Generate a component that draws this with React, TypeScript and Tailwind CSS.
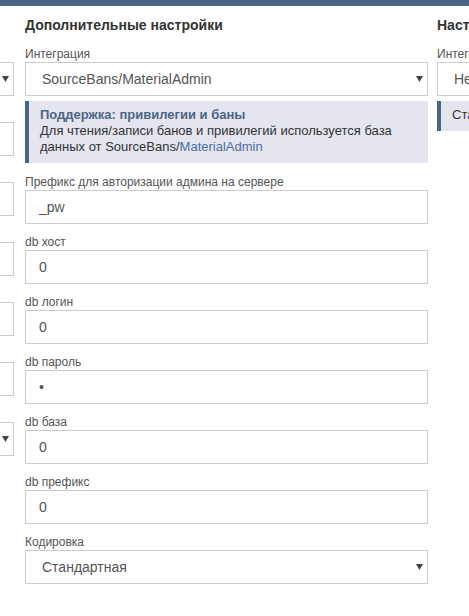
import React from "react";

const Arrow = () => (
  <svg width="7" height="6" viewBox="0 0 7 6" className="absolute right-[4px] top-1/2 -translate-y-1/2">
    <path d="M0 0 H7 L3.5 6 Z" fill="#444" />
  </svg>
);

const Label = ({ children }: { children?: React.ReactNode }) => (
  <div className="h-[16px] text-[12px] leading-[16px] text-[#555] whitespace-nowrap">{children}</div>
);

const Input = ({ value }: { value?: string }) => (
  <div className="h-[34px] border border-[#ccc] bg-white flex items-center pl-[13px] text-[14px] text-[#555] whitespace-nowrap overflow-hidden">
    {value}
  </div>
);

const Select = ({ value }: { value?: string }) => (
  <div className="relative h-[34px] border border-[#ccc] bg-white flex items-center pl-[16px] text-[14px] text-[#555] whitespace-nowrap overflow-hidden">
    {value}
    <Arrow />
  </div>
);

const Field = ({ label, value, select }: { label?: string; value?: string; select?: boolean }) => (
  <div className="mb-[10px]">
    <Label>{label}</Label>
    {select ? <Select value={value} /> : <Input value={value} />}
  </div>
);

const Title = ({ children }: { children?: React.ReactNode }) => (
  <div className="h-[20px] text-[14px] leading-[20px] font-bold text-[#333] mb-[11px] whitespace-nowrap">{children}</div>
);

export default function App() {
  return (
    <div className="w-[469px] h-[616px] overflow-hidden bg-white font-['Liberation_Sans',Arial,sans-serif]">
      <div className="h-[6px] bg-[#4b6589]" />
      <div className="flex ml-[-389px] pt-[9px]">
        {/* left column (only its right edge is visible) */}
        <div className="w-[403px] shrink-0 mr-[11px]">
          <Title />
          <Label />
          <Select />
          <div className="h-[10px]" />
          <Field />
          <Field />
          <Field />
          <Field />
          <Field />
          <Field select />
        </div>
        {/* main column */}
        <div className="w-[403px] shrink-0 mr-[9px]">
          <Title>Дополнительные настройки</Title>
          <Label>Интеграция</Label>
          <Select value="SourceBans/MaterialAdmin" />
          <div className="mt-[5px] mb-[11px] bg-[#e4e5ee] border-l-[4px] border-[#4b6589] pl-[11px] pr-[8px] pt-[6px] pb-[8px] text-[13px] leading-[16px]">
            <div className="font-bold text-[#4b6589]">Поддержка: привилегии и баны</div>
            <div className="text-[#333]">
              Для чтения/записи банов и привилегий используется база данных от SourceBans/<span className="text-[#4a6fa5]">MaterialAdmin</span>
            </div>
          </div>
          <Field label="Префикс для авторизации админа на сервере" value="_pw" />
          <Field label="db хост" value="0" />
          <Field label="db логин" value="0" />
          <Field label="db пароль" value="•" />
          <Field label="db база" value="0" />
          <Field label="db префикс" value="0" />
          <Field label="Кодировка" value="Стандартная" select />
        </div>
        {/* right column */}
        <div className="w-[403px] shrink-0">
          <Title>Настройки статистики</Title>
          <Label>Интеграция</Label>
          <Select value="Нет" />
          <div className="mt-[5px] bg-[#e4e5ee] border-l-[4px] border-[#4b6589] pl-[11px] pr-[8px] pt-[6px] pb-[8px] text-[13px] leading-[16px] text-[#333]">
            Статистика не используется
          </div>
        </div>
      </div>
    </div>
  );
}
